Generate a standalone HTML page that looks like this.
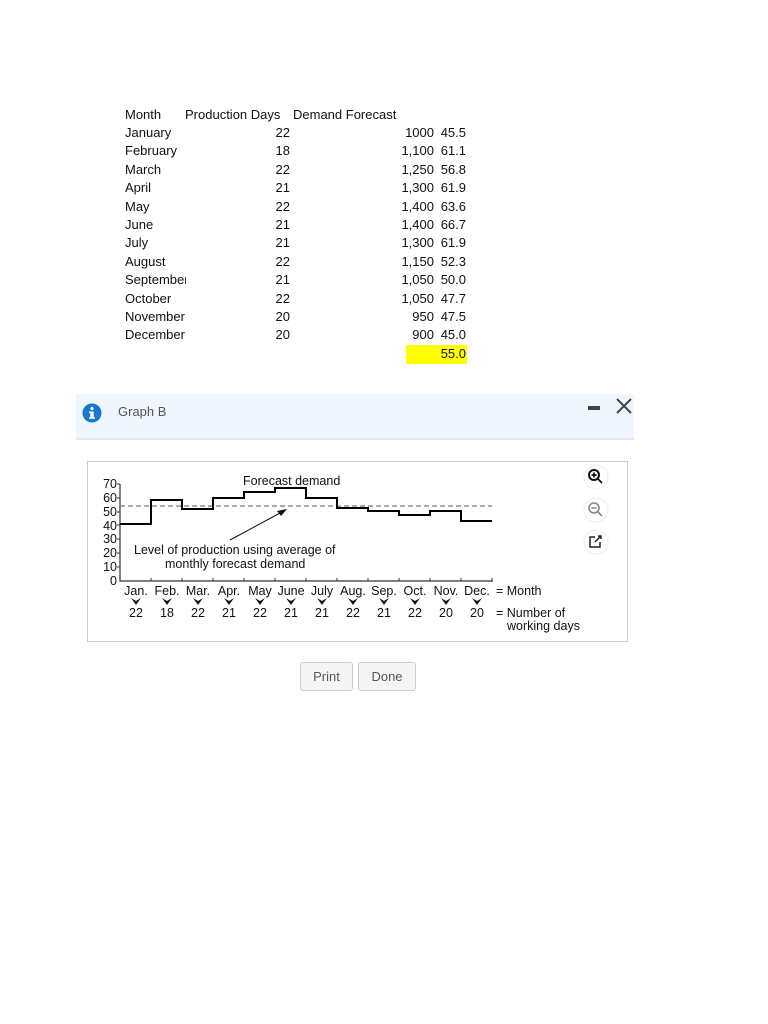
<!DOCTYPE html>
<html><head><meta charset="utf-8"><style>
body{margin:0;width:768px;height:1024px;background:#fff;position:relative;overflow:hidden;font-family:"Liberation Sans",sans-serif}
.t{position:absolute;font-size:13px;color:#111;line-height:16px;white-space:nowrap;font-family:"Liberation Sans",sans-serif}
.r{text-align:right}
.btn{position:absolute;top:662px;height:27px;border:1px solid #ccc;border-radius:3px;background:#f5f5f5;font-size:13px;color:#555;text-align:center;line-height:27px}
</style></head><body>
<div class="t" style="left:125px;top:107px">Month</div>
<div class="t" style="left:185px;top:107px">Production Days</div>
<div class="t" style="left:293px;top:107px">Demand Forecast</div>

<div class="t" style="left:125px;top:125px">January</div><div class="t r" style="left:240px;width:50px;top:125px">22</div><div class="t r" style="left:334px;width:100px;top:125px">1000</div><div class="t r" style="left:416px;width:50px;top:125px">45.5</div>
<div class="t" style="left:125px;top:143.4px">February</div><div class="t r" style="left:240px;width:50px;top:143.4px">18</div><div class="t r" style="left:334px;width:100px;top:143.4px">1,100</div><div class="t r" style="left:416px;width:50px;top:143.4px">61.1</div>
<div class="t" style="left:125px;top:161.8px">March</div><div class="t r" style="left:240px;width:50px;top:161.8px">22</div><div class="t r" style="left:334px;width:100px;top:161.8px">1,250</div><div class="t r" style="left:416px;width:50px;top:161.8px">56.8</div>
<div class="t" style="left:125px;top:180.2px">April</div><div class="t r" style="left:240px;width:50px;top:180.2px">21</div><div class="t r" style="left:334px;width:100px;top:180.2px">1,300</div><div class="t r" style="left:416px;width:50px;top:180.2px">61.9</div>
<div class="t" style="left:125px;top:198.6px">May</div><div class="t r" style="left:240px;width:50px;top:198.6px">22</div><div class="t r" style="left:334px;width:100px;top:198.6px">1,400</div><div class="t r" style="left:416px;width:50px;top:198.6px">63.6</div>
<div class="t" style="left:125px;top:217px">June</div><div class="t r" style="left:240px;width:50px;top:217px">21</div><div class="t r" style="left:334px;width:100px;top:217px">1,400</div><div class="t r" style="left:416px;width:50px;top:217px">66.7</div>
<div class="t" style="left:125px;top:235.4px">July</div><div class="t r" style="left:240px;width:50px;top:235.4px">21</div><div class="t r" style="left:334px;width:100px;top:235.4px">1,300</div><div class="t r" style="left:416px;width:50px;top:235.4px">61.9</div>
<div class="t" style="left:125px;top:253.8px">August</div><div class="t r" style="left:240px;width:50px;top:253.8px">22</div><div class="t r" style="left:334px;width:100px;top:253.8px">1,150</div><div class="t r" style="left:416px;width:50px;top:253.8px">52.3</div>
<div class="t" style="left:125px;top:272.2px;width:61px;overflow:hidden">September</div><div class="t r" style="left:240px;width:50px;top:272.2px">21</div><div class="t r" style="left:334px;width:100px;top:272.2px">1,050</div><div class="t r" style="left:416px;width:50px;top:272.2px">50.0</div>
<div class="t" style="left:125px;top:290.6px">October</div><div class="t r" style="left:240px;width:50px;top:290.6px">22</div><div class="t r" style="left:334px;width:100px;top:290.6px">1,050</div><div class="t r" style="left:416px;width:50px;top:290.6px">47.7</div>
<div class="t" style="left:125px;top:309px">November</div><div class="t r" style="left:240px;width:50px;top:309px">20</div><div class="t r" style="left:334px;width:100px;top:309px">950</div><div class="t r" style="left:416px;width:50px;top:309px">47.5</div>
<div class="t" style="left:125px;top:327.4px">December</div><div class="t r" style="left:240px;width:50px;top:327.4px">20</div><div class="t r" style="left:334px;width:100px;top:327.4px">900</div><div class="t r" style="left:416px;width:50px;top:327.4px">45.0</div>
<div style="position:absolute;left:406px;top:345px;width:61px;height:19px;background:#ffff00"></div>
<div class="t r" style="left:416px;width:50px;top:346px">55.0</div>

<div style="position:absolute;left:76px;top:394px;width:558px;height:44px;background:#f0f6fd;border-bottom:2px solid #dde9f7"></div>
<svg style="position:absolute;left:82px;top:403px" width="20" height="20"><circle cx="10" cy="10" r="9.5" fill="#1677d2"/><circle cx="10" cy="5.5" r="1.6" fill="#fff"/><rect x="8.3" y="8.5" width="3.4" height="7" fill="#fff"/><rect x="7" y="8.5" width="2" height="1.5" fill="#fff"/><rect x="7" y="14.3" width="6" height="1.5" fill="#fff"/></svg>
<div style="position:absolute;left:118px;top:404px;font-size:13px;color:#555">Graph B</div>
<div style="position:absolute;left:588px;top:406px;width:12px;height:4px;background:#444"></div>
<svg style="position:absolute;left:615px;top:397px" width="18" height="18"><path d="M2 2L16 16M16 2L2 16" stroke="#444" stroke-width="2"/></svg>

<div style="position:absolute;left:87px;top:461px;width:539px;height:179px;border:1px solid #ccc"></div>
<svg style="position:absolute;left:0;top:0" width="768" height="1024" font-family="Liberation Sans, sans-serif">
<g font-size="12.5" fill="#111" text-anchor="end">
<text x="117" y="488">70</text><text x="117" y="502">60</text><text x="117" y="516">50</text><text x="117" y="530">40</text><text x="117" y="543">30</text><text x="117" y="557">20</text><text x="117" y="571">10</text><text x="117" y="585">0</text>
</g>
<path d="M120 484V581H493" stroke="#333" fill="none" stroke-width="1.2"/>
<path d="M117 484h3M117 498h3M117 512h3M117 525h3M117 539h3M117 553h3M117 567h3M151 581v-3M182 581v-3M213 581v-3M244 581v-3M275 581v-3M306 581v-3M337 581v-3M368 581v-3M399 581v-3M430 581v-3M461 581v-3M492 581v-3" stroke="#333"/>
<path d="M120 506H492" stroke="#777" stroke-dasharray="5,3" stroke-width="1.2"/>
<path d="M120 524H151V500H182V509H213V498H244V492H275V488H306V498H337V508H368V511H399V515H430V511H461V521H492" stroke="#000" stroke-width="2" fill="none"/>
<path d="M230 540L282 512" stroke="#111"/><path d="M287 509l-10 2 4 5z" fill="#111"/>
<text x="243" y="485" font-size="12.5" fill="#111">Forecast demand</text>
<text x="134" y="554" font-size="12.5" fill="#111">Level of production using average of</text>
<text x="165" y="568" font-size="12.5" fill="#111">monthly forecast demand</text>
<g font-size="12.5" fill="#111" text-anchor="middle">
<text x="136" y="595">Jan.</text><text x="167" y="595">Feb.</text><text x="198" y="595">Mar.</text><text x="229" y="595">Apr.</text><text x="260" y="595">May</text><text x="291" y="595">June</text><text x="322" y="595">July</text><text x="353" y="595">Aug.</text><text x="384" y="595">Sep.</text><text x="415" y="595">Oct.</text><text x="446" y="595">Nov.</text><text x="477" y="595">Dec.</text>
<text x="136" y="617">22</text><text x="167" y="617">18</text><text x="198" y="617">22</text><text x="229" y="617">21</text><text x="260" y="617">22</text><text x="291" y="617">21</text><text x="322" y="617">21</text><text x="353" y="617">22</text><text x="384" y="617">21</text><text x="415" y="617">22</text><text x="446" y="617">20</text><text x="477" y="617">20</text>
</g>
<g fill="#111">
<path d="M131 598l5 7 5-7-5 3z"/><path d="M162 598l5 7 5-7-5 3z"/><path d="M193 598l5 7 5-7-5 3z"/><path d="M224 598l5 7 5-7-5 3z"/><path d="M255 598l5 7 5-7-5 3z"/><path d="M286 598l5 7 5-7-5 3z"/><path d="M317 598l5 7 5-7-5 3z"/><path d="M348 598l5 7 5-7-5 3z"/><path d="M379 598l5 7 5-7-5 3z"/><path d="M410 598l5 7 5-7-5 3z"/><path d="M441 598l5 7 5-7-5 3z"/><path d="M472 598l5 7 5-7-5 3z"/>
</g>
<g font-size="12.5" fill="#111"><text x="496" y="595">= Month</text><text x="496" y="617">= Number of</text><text x="507" y="630">working days</text></g>
<g>
<circle cx="596" cy="477" r="12" fill="#fff" stroke="#eee"/><circle cx="594" cy="475" r="5" fill="none" stroke="#111" stroke-width="2"/><path d="M598 479l4 4M594 472.5v5M591.5 475h5" stroke="#111" stroke-width="1.8"/>
<circle cx="596" cy="510" r="12" fill="#fff" stroke="#eee"/><circle cx="594" cy="508" r="5" fill="none" stroke="#888" stroke-width="1.6"/><path d="M598 512l4 4M591.5 508h5" stroke="#888" stroke-width="1.6"/>
<circle cx="596" cy="542" r="12" fill="#fff" stroke="#eee"/><path d="M595 537h-5v10h10v-5" fill="none" stroke="#222" stroke-width="1.5"/><path d="M595 542l6-6M598 536h3v3" stroke="#222" stroke-width="1.5" fill="none"/>
</g>
</svg>

<div class="btn" style="left:300px;width:51px">Print</div>
<div class="btn" style="left:358px;width:56px">Done</div>
</body></html>
